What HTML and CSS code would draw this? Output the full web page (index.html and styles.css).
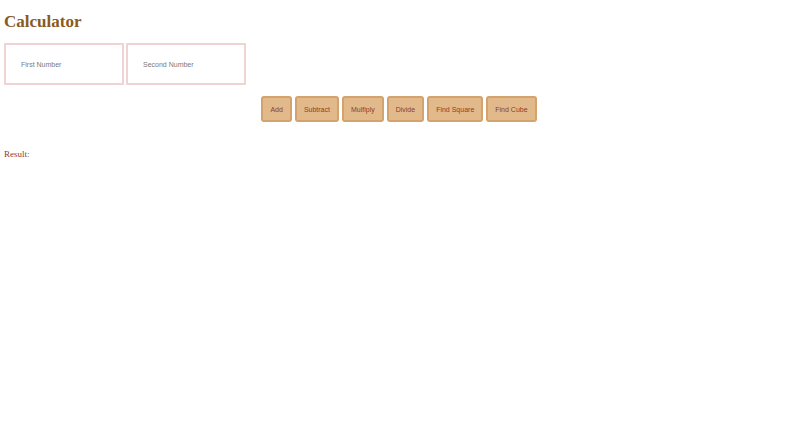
FILE: index.html
```html
<!DOCTYPE html>
<html>
<head>
<meta charset="utf-8">
<title>Calculator</title>
<link rel="stylesheet" href="styles.css">
</head>
<body>
<h1 class="title">Calculator</h1>
<div class="inputs">
  <input class="num" type="text" placeholder="First Number">
  <input class="num" type="text" placeholder="Second Number">
</div>
<div class="buttons">
  <button class="btn">Add</button>
  <button class="btn">Subtract</button>
  <button class="btn">Mulfiply</button>
  <button class="btn">Divide</button>
  <button class="btn">Find Square</button>
  <button class="btn">Find Cube</button>
</div>
<p class="result">Result:</p>
</body>
</html>
```
FILE: styles.css
```css
body {
  margin: 4px;
  background: #ffffff;
  font-family: "Liberation Serif", serif;
}
.title {
  margin: 8px 0 11px;
  font-size: 17px;
  line-height: 20px;
  font-weight: bold;
  color: #8a5a1e;
}
.inputs {
  display: flex;
  gap: 2px;
}
.num {
  box-sizing: border-box;
  width: 120px;
  height: 42px;
  margin: 0;
  padding: 0 15px;
  border: 2px solid #f0d4d4;
  font-family: "Liberation Sans", sans-serif;
  font-size: 7px;
  color: #555;
  outline: none;
}
.num::placeholder {
  color: #7a7a7a;
  opacity: 1;
}
.buttons {
  display: flex;
  justify-content: center;
  gap: 3px;
  margin-top: 11px;
  padding-right: 2px;
}
.btn {
  box-sizing: border-box;
  height: 26px;
  margin: 0;
  padding: 0 7px;
  background: #e2b98b;
  border: 2px solid #d4a26c;
  border-radius: 3px;
  font-family: "Liberation Sans", sans-serif;
  font-size: 7px;
  color: #8b3f2a;
}
.result {
  margin: 26px 0 0;
  font-size: 9px;
  line-height: 12px;
  color: #8b3a3a;
}
```
